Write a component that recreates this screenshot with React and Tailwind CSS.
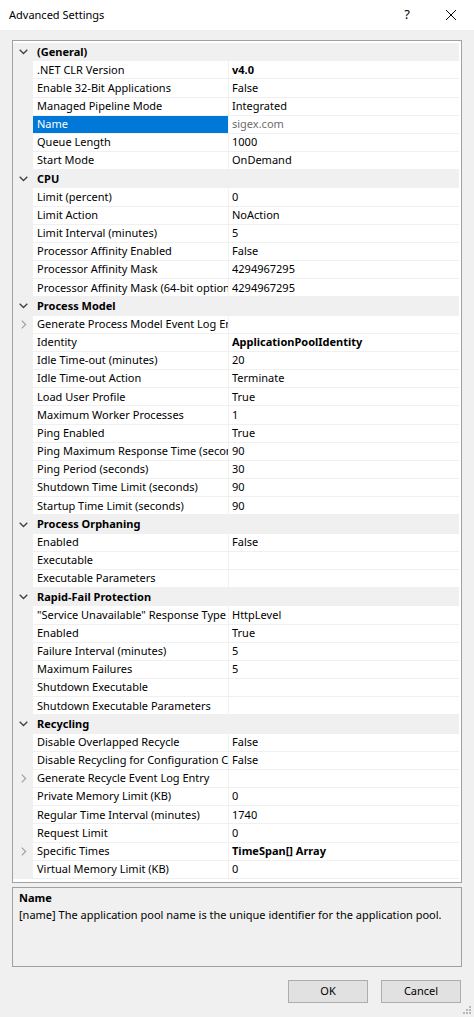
import React from "react";

const F = { fontFamily: '"Noto Sans", "Open Sans", sans-serif' };

const data = [
  { cat: "(General)" },
  { n: ".NET CLR Version", v: "v4.0", b: true },
  { n: "Enable 32-Bit Applications", v: "False" },
  { n: "Managed Pipeline Mode", v: "Integrated" },
  { n: "Name", v: "sigex.com", sel: true },
  { n: "Queue Length", v: "1000" },
  { n: "Start Mode", v: "OnDemand" },
  { cat: "CPU" },
  { n: "Limit (percent)", v: "0" },
  { n: "Limit Action", v: "NoAction" },
  { n: "Limit Interval (minutes)", v: "5" },
  { n: "Processor Affinity Enabled", v: "False" },
  { n: "Processor Affinity Mask", v: "4294967295" },
  { n: "Processor Affinity Mask (64-bit option)", v: "4294967295" },
  { cat: "Process Model" },
  { n: "Generate Process Model Event Log Entry", v: "", exp: true },
  { n: "Identity", v: "ApplicationPoolIdentity", b: true },
  { n: "Idle Time-out (minutes)", v: "20" },
  { n: "Idle Time-out Action", v: "Terminate" },
  { n: "Load User Profile", v: "True" },
  { n: "Maximum Worker Processes", v: "1" },
  { n: "Ping Enabled", v: "True" },
  { n: "Ping Maximum Response Time (seconds)", v: "90" },
  { n: "Ping Period (seconds)", v: "30" },
  { n: "Shutdown Time Limit (seconds)", v: "90" },
  { n: "Startup Time Limit (seconds)", v: "90" },
  { cat: "Process Orphaning" },
  { n: "Enabled", v: "False" },
  { n: "Executable", v: "" },
  { n: "Executable Parameters", v: "" },
  { cat: "Rapid-Fail Protection" },
  { n: "\"Service Unavailable\" Response Type", v: "HttpLevel" },
  { n: "Enabled", v: "True" },
  { n: "Failure Interval (minutes)", v: "5" },
  { n: "Maximum Failures", v: "5" },
  { n: "Shutdown Executable", v: "" },
  { n: "Shutdown Executable Parameters", v: "" },
  { cat: "Recycling" },
  { n: "Disable Overlapped Recycle", v: "False" },
  { n: "Disable Recycling for Configuration Changes", v: "False" },
  { n: "Generate Recycle Event Log Entry", v: "", exp: true },
  { n: "Private Memory Limit (KB)", v: "0" },
  { n: "Regular Time Interval (minutes)", v: "1740" },
  { n: "Request Limit", v: "0" },
  { n: "Specific Times", v: "TimeSpan[] Array", b: true, exp: true },
  { n: "Virtual Memory Limit (KB)", v: "0" },
];

function Down() {
  return (
    <svg width="9" height="6" viewBox="0 0 9 6" className="block">
      <path d="M0.7 0.7 L4.5 4.5 L8.3 0.7" fill="none" stroke="#404040" strokeWidth="1.3" />
    </svg>
  );
}
function Right() {
  return (
    <svg width="6" height="9" viewBox="0 0 6 9" className="block">
      <path d="M0.8 0.7 L4.6 4.5 L0.8 8.3" fill="none" stroke="#a0a0a0" strokeWidth="1.2" />
    </svg>
  );
}

function Row({ r }) {
  if (r.cat) {
    return (
      <div className="flex h-[18.18px] items-center bg-[#f0f0f0]">
        <div className="flex w-[20px] shrink-0 justify-center pl-[1px]">
          <Down />
        </div>
        <div className="pl-[4px] font-bold text-black">{r.cat}</div>
      </div>
    );
  }
  return (
    <div className="flex h-[18.18px] items-stretch">
      <div className="flex w-[20px] shrink-0 items-center justify-center bg-[#f0f0f0] pl-[1px]">
        {r.exp ? <Right /> : null}
      </div>
      <div
        className={
          "flex w-[195px] shrink-0 items-center overflow-hidden whitespace-nowrap pl-[4px] border-b border-[#f0f0f0] " +
          (r.sel ? "bg-[#0078d7] text-white" : "text-black")
        }
      >
        {r.n}
      </div>
      <div className="w-[1px] shrink-0 bg-[#f0f0f0]" />
      <div
        className={
          "flex flex-1 items-center overflow-hidden whitespace-nowrap pl-[3px] border-b border-[#f0f0f0] " +
          (r.sel ? "text-[#6d6d6d]" : "text-black") +
          (r.b ? " font-bold" : "")
        }
      >
        {r.v}
      </div>
    </div>
  );
}

export default function App() {
  return (
    <div className="relative h-[1017px] w-[474px] overflow-hidden bg-[#f0f0f0] text-[11px]" style={F}>
      <div className="flex h-[30px] items-center bg-white pl-[9px] text-[11px] text-black">
        <div className="flex-1">Advanced Settings</div>
        <div className="w-[30px] text-center text-[13px] mr-[23px]">?</div>
        <svg width="12" height="12" viewBox="0 0 12 12" className="mr-[17px]">
          <path d="M1 1 L11 11 M11 1 L1 11" stroke="#000" strokeWidth="1" />
        </svg>
      </div>
      <div className="px-[12px] pt-[10px]">
        <div className="h-[843px] overflow-hidden border border-[#a0a0a0] bg-white pt-[2px]">
          <div className="mr-[2px]">
            {data.map((r, i) => (
              <Row key={i} r={r} />
            ))}
          </div>
        </div>
        <div className="mt-[4px] h-[80px] border border-[#a0a0a0] bg-[#f0f0f0] px-[6px] pt-[1px] text-black">
          <div className="font-bold leading-[17px]">Name</div>
          <div className="leading-[17px]">[name] The application pool name is the unique identifier for the application pool.</div>
        </div>
        <div className="mt-[13px] flex justify-end gap-[13px] pr-[1px]">
          <button className="h-[23px] w-[80px] border border-[#adadad] bg-[#e1e1e1] text-black">OK</button>
          <button className="h-[23px] w-[80px] border border-[#adadad] bg-[#e1e1e1] text-black">Cancel</button>
        </div>
      </div>
      <svg width="10" height="10" viewBox="0 0 10 10" className="absolute bottom-[2px] right-[2px]">
        <rect x="7" y="1" width="2" height="2" fill="#b8b8b8" />
        <rect x="4" y="4" width="2" height="2" fill="#b8b8b8" />
        <rect x="7" y="4" width="2" height="2" fill="#b8b8b8" />
        <rect x="1" y="7" width="2" height="2" fill="#b8b8b8" />
        <rect x="4" y="7" width="2" height="2" fill="#b8b8b8" />
        <rect x="7" y="7" width="2" height="2" fill="#b8b8b8" />
      </svg>
    </div>
  );
}
